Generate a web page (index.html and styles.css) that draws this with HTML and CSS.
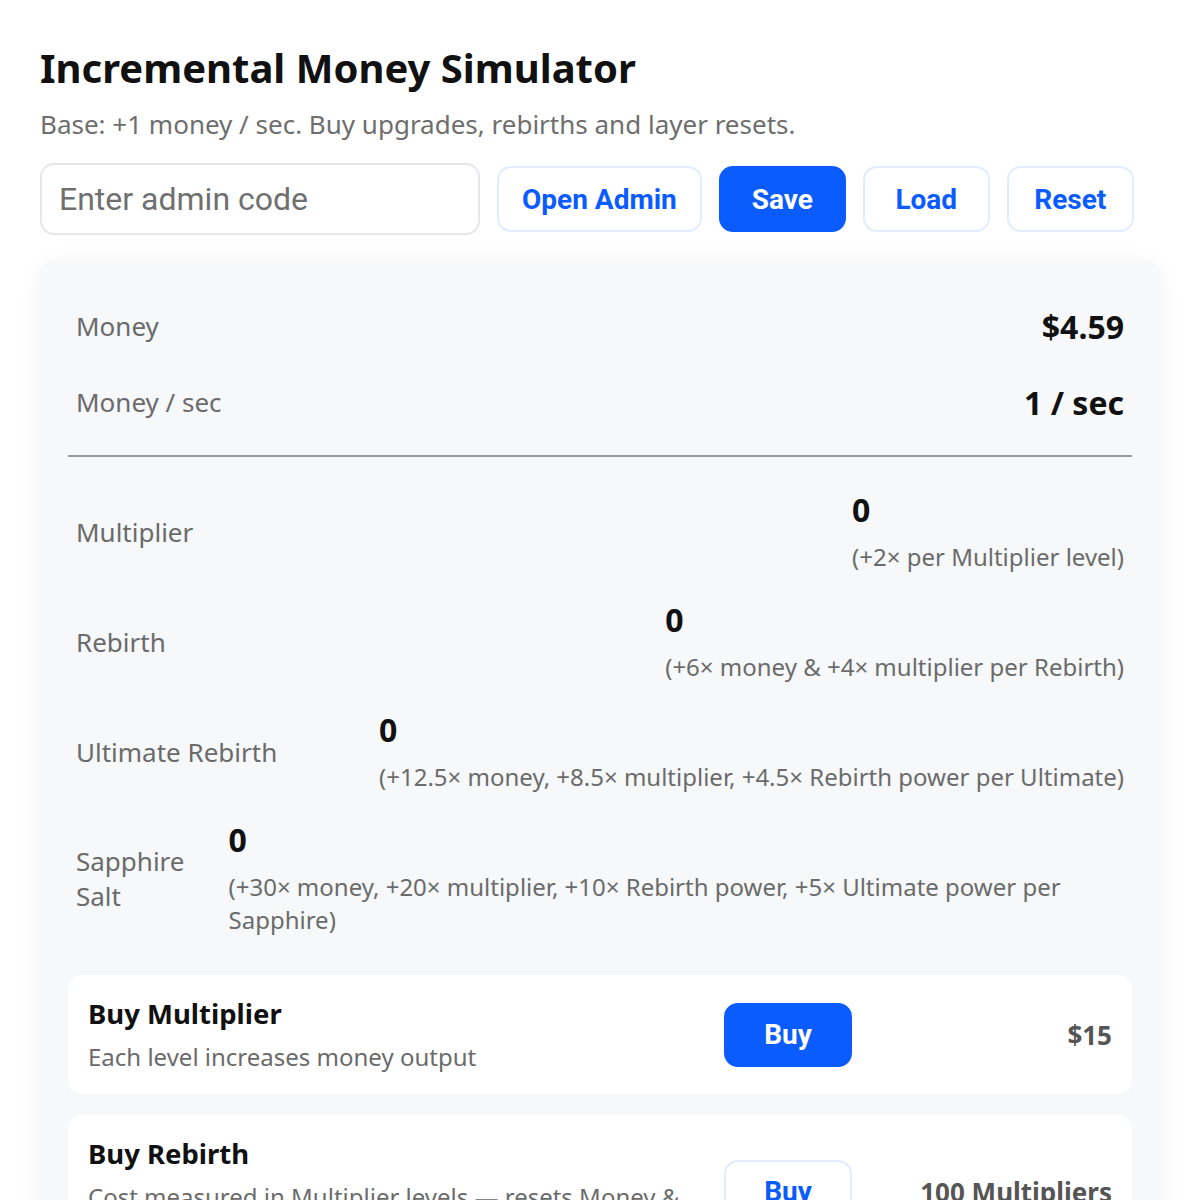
FILE: index.html
```html
<!DOCTYPE html>
<html lang="en">

<head>
    <meta charset="UTF-8">
    <meta name="viewport" content="width=device-width, initial-scale=1.0">
    <title>Incremental Money Simulator</title>
    <link rel="stylesheet" href="styles.css">
</head>

<body>
    <h1 class="title">Incremental Money Simulator</h1>
    <p class="subtitle">Base: +1 money / sec. Buy upgrades, rebirths and layer resets.</p>

    <div class="toolbar">
        <input class="admin-code" type="text" placeholder="Enter admin code">
        <button class="btn">Open Admin</button>
        <button class="btn primary">Save</button>
        <button class="btn">Load</button>
        <button class="btn">Reset</button>
    </div>

    <section class="panel">
        <div class="stat-row">
            <span class="label">Money</span>
            <span class="value">$4.59</span>
        </div>
        <div class="stat-row">
            <span class="label">Money / sec</span>
            <span class="value">1 / sec</span>
        </div>

        <hr class="divider">

        <div class="level-row">
            <span class="label">Multiplier</span>
            <div class="level">
                <div class="count">0</div>
                <div class="note">(+2× per Multiplier level)</div>
            </div>
        </div>
        <div class="level-row">
            <span class="label">Rebirth</span>
            <div class="level">
                <div class="count">0</div>
                <div class="note">(+6× money &amp; +4× multiplier per Rebirth)</div>
            </div>
        </div>
        <div class="level-row">
            <span class="label">Ultimate Rebirth</span>
            <div class="level">
                <div class="count">0</div>
                <div class="note">(+12.5× money, +8.5× multiplier, +4.5× Rebirth power per Ultimate)</div>
            </div>
        </div>
        <div class="level-row">
            <span class="label">Sapphire Salt</span>
            <div class="level">
                <div class="count">0</div>
                <div class="note">(+30× money, +20× multiplier, +10× Rebirth power, +5× Ultimate power per Sapphire)</div>
            </div>
        </div>

        <div class="shop">
            <div class="shop-item">
                <div class="shop-text">
                    <div class="shop-title">Buy Multiplier</div>
                    <div class="shop-desc">Each level increases money output</div>
                </div>
                <button class="btn primary buy">Buy</button>
                <div class="price">$15</div>
            </div>
            <div class="shop-item">
                <div class="shop-text">
                    <div class="shop-title">Buy Rebirth</div>
                    <div class="shop-desc">Cost measured in Multiplier levels — resets Money &amp; Multiplier</div>
                </div>
                <button class="btn buy">Buy</button>
                <div class="price">100 Multipliers</div>
            </div>
        </div>
    </section>
</body>

</html>
```

FILE: styles.css
```css
* {
    box-sizing: border-box;
}

body {
    margin: 0;
    padding: 42px 40px 40px 40px;
    background-color: #ffffff;
    font-family: 'Noto Sans', sans-serif;
    color: #111111;
}

.title {
    margin: 0;
    font-size: 40px;
    line-height: 52px;
    font-weight: 700;
}

.subtitle {
    margin: 11px 0 0 0;
    font-size: 26px;
    line-height: 39px;
    color: #6e6e6e;
}

.toolbar {
    display: flex;
    align-items: center;
    gap: 17px;
    margin-top: 19px;
}

.admin-code {
    width: 440px;
    height: 72px;
    padding: 0 17px;
    border: 2px solid #e6e8ec;
    border-radius: 14px;
    font-family: 'Roboto', sans-serif;
    font-size: 32px;
    color: #333333;
    outline: none;
}

.admin-code::placeholder {
    color: #707070;
}

.btn {
    min-width: 127px;
    height: 66px;
    padding: 0 23px;
    border: 2px solid #e3ebfd;
    border-radius: 14px;
    background-color: #ffffff;
    color: #0a5cff;
    font-family: 'Roboto', sans-serif;
    font-size: 28px;
    font-weight: 700;
    cursor: pointer;
}

.btn.primary {
    background-color: #0a5cff;
    border-color: #0a5cff;
    color: #ffffff;
}

.panel {
    margin-top: 25px;
    padding: 28px;
    background-color: #f6f8fa;
    border-radius: 16px;
    box-shadow: 0 4px 24px rgba(0, 0, 0, 0.06);
}

.stat-row {
    display: flex;
    justify-content: space-between;
    align-items: center;
    height: 76px;
    padding: 0 8px;
}

.label {
    font-size: 26px;
    line-height: 35px;
    color: #6b6b6b;
}

.value {
    font-size: 32px;
    font-weight: 700;
    color: #111111;
}

.divider {
    margin: 15px 0 20px 0;
    border: none;
    border-top: 2px solid #9a9a9a;
}

.level-row {
    display: flex;
    justify-content: space-between;
    align-items: center;
    gap: 44px;
    padding: 14px 8px;
}

.level-row .label {
    flex-shrink: 100;
}

.count {
    font-size: 32px;
    font-weight: 700;
    line-height: 37px;
    margin-bottom: 12px;
}

.note {
    font-size: 24px;
    line-height: 33px;
    color: #6b6b6b;
}

.shop {
    display: flex;
    flex-direction: column;
    gap: 21px;
    margin-top: 25px;
}

.shop-item {
    display: grid;
    grid-template-columns: 1fr 128px 240px;
    align-items: center;
    gap: 20px;
    padding: 20px;
    background-color: #ffffff;
    border-radius: 14px;
}

.shop-title {
    font-size: 27.5px;
    font-weight: 700;
    line-height: 38px;
    margin-bottom: 7px;
}

.shop-desc {
    font-size: 24px;
    line-height: 34px;
    color: #6b6b6b;
}

.buy {
    width: 128px;
    height: 64px;
    padding: 0;
}

.price {
    text-align: right;
    font-size: 26px;
    font-weight: 700;
    color: #555555;
}
```
